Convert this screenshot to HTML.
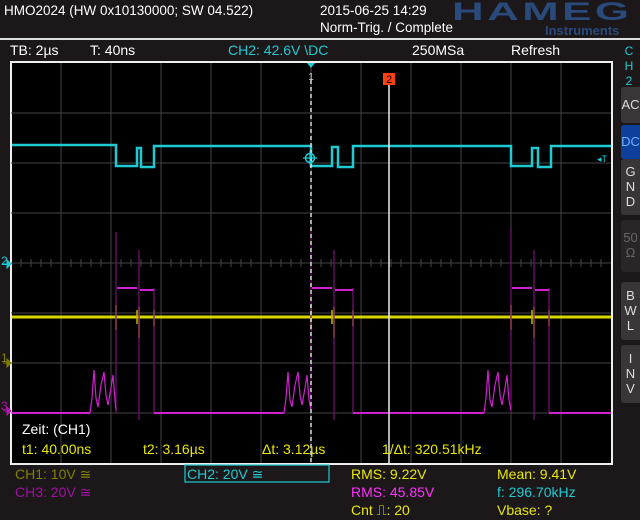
<!DOCTYPE html>
<html><head><meta charset="utf-8"><style>
body{margin:0;width:640px;height:520px;background:#1c1719;overflow:hidden;font-family:"Liberation Sans","DejaVu Sans",sans-serif;position:relative;color:#fff}
.t{position:absolute;white-space:nowrap;font-size:14px;line-height:16px}
.btn{position:absolute;left:621px;width:19px;background:#3a3638;border-radius:3px 0 0 3px;color:#ddd;font-size:13px;text-align:center;line-height:15px}
</style></head><body>
<div class="t" style="left:4px;top:3px;font-size:13.5px">HMO2024 (HW 0x10130000; SW 04.522)</div>
<div class="t" style="left:320px;top:3px;font-size:13.5px">2015-06-25 14:29</div>
<div class="t" style="left:320px;top:20px;font-size:13.5px">Norm-Trig. / Complete</div>
<div class="t" style="left:452px;top:-2px;font-size:25px;line-height:28px;font-weight:bold;color:#2a4a7c;letter-spacing:2px;transform:scale(1.75,1);transform-origin:left">HAMEG</div>
<div class="t" style="left:545px;top:23px;font-size:13px;font-weight:bold;color:#2a4a7c">Instruments</div>
<div style="position:absolute;left:0;top:38px;width:640px;height:2px;background:#ddd"></div>
<div class="t" style="left:10px;top:42px">TB: 2µs</div>
<div class="t" style="left:90px;top:42px">T: 40ns</div>
<div class="t" style="left:228px;top:42px;color:#1ecbd2">CH2: 42.6V \DC</div>
<div class="t" style="left:412px;top:42px">250MSa</div>
<div class="t" style="left:511px;top:42px">Refresh</div>
<div class="t" style="left:624px;top:44px;color:#1ecbd2;font-size:12px;line-height:15px;text-align:center;width:10px">C<br>H<br>2</div>
<div class="btn" style="top:87px;height:36px;line-height:36px">AC</div>
<div class="btn" style="top:125px;height:34px;line-height:34px;background:#0f3f9c;color:#6fb0ff">DC</div>
<div class="btn" style="top:159px;padding-top:5px;height:51px">G<br>N<br>D</div>
<div class="btn" style="top:220px;background:#2a2628;color:#666;padding-top:10px;height:42px">50<br>Ω</div>
<div class="btn" style="top:282px;padding-top:6px;height:52px">B<br>W<br>L</div>
<div class="btn" style="top:345px;padding-top:6px;height:52px">I<br>N<br>V</div>
<svg style="position:absolute;left:0;top:0" width="640" height="520">
<rect x="11" y="62" width="601" height="402" fill="#000" stroke="#eee" stroke-width="2"/>
<g stroke="#444" stroke-width="1">
<path d="M61 63V463M111 63V463M161 63V463M211 63V463M261 63V463M361 63V463M411 63V463M461 63V463M511 63V463M561 63V463"/>
<path d="M311 63V463"/>
<path d="M11 113H611M11 163H611M11 213H611M11 263H611M11 313H611M11 363H611M11 413H611"/>
<path d="M21 259v8M31 259v8M41 259v8M51 259v8M71 259v8M81 259v8M91 259v8M101 259v8M121 259v8M131 259v8M141 259v8M151 259v8M171 259v8M181 259v8M191 259v8M201 259v8M221 259v8M231 259v8M241 259v8M251 259v8M271 259v8M281 259v8M291 259v8M301 259v8M321 259v8M331 259v8M341 259v8M351 259v8M371 259v8M381 259v8M391 259v8M401 259v8M421 259v8M431 259v8M441 259v8M451 259v8M471 259v8M481 259v8M491 259v8M501 259v8M521 259v8M531 259v8M541 259v8M551 259v8M571 259v8M581 259v8M591 259v8M601 259v8"/>
</g>
<!-- yellow -->
<path d="M12 317H611" stroke="#d8d800" stroke-width="3" fill="none"/>
<path d="M116 305V330M137 310V324M139 307V338M154 310V326M311 305V330M332 310V324M334 307V338M353 310V326M511 305V330M532 310V324M534 307V338M549 310V326" stroke="#b8b800" stroke-width="1.5" fill="none"/>
<!-- magenta thin edges -->
<g stroke="#7a107a" stroke-width="1.2"><path d="M116 232V413M139 250V420M154 288V413M311 228V413M334 250V420M353 288V413M511 228V413M534 250V420M549 288V413"/></g>
<!-- magenta -->
<g stroke="#d020d0" stroke-width="2" fill="none">
<path d="M12 413H90"/><path d="M90 413L92 398L94 370L96 398L98 407L101 385L104 372L106 395L108 405L111 388L113 375L115 400L116 410" stroke-width="1.2"/>
<path d="M117 288H137M140 290H154M154 413H284"/>
<path d="M284 413L286 398L288 372L290 400L292 407L295 385L298 372L300 395L302 405L305 388L307 375L309 400L311 410" stroke-width="1.2"/>
<path d="M312 288H332M335 290H353M353 413H484"/>
<path d="M484 413L486 398L488 370L490 400L492 407L495 385L498 372L500 395L502 405L505 388L507 375L509 400L511 410" stroke-width="1.2"/>
<path d="M512 288H532M535 290H549M549 413H611"/>
</g>
<!-- cyan -->
<path d="M12 145H116V166H137V148H141V167H154V146H311V166H332V147H338V167H353V146H511V166H532V148H538V167H551V146H611" stroke="#1ecbd2" stroke-width="2.5" fill="none"/>
<!-- cursors -->
<path d="M311 80V463" stroke="#ddd" stroke-width="1.5" stroke-dasharray="4 3"/>
<path d="M389 84V463" stroke="#eee" stroke-width="1.5"/>
<rect x="383" y="73" width="12" height="12" fill="#ff4010"/>
<text x="389" y="83" fill="#000" font-size="11" text-anchor="middle" font-family="Liberation Sans">2</text>
<text x="311" y="80" fill="#ddd" font-size="10" text-anchor="middle" font-family="Liberation Sans">1</text>
<path d="M307 63h8l-4 5z" fill="#1ecbd2"/>
<circle cx="310" cy="158" r="4.5" stroke="#1ecbd2" fill="none" stroke-width="1.5"/>
<path d="M303 158h14M310 151v14" stroke="#1ecbd2" stroke-width="1.2"/>
<text x="597" y="162" fill="#1ecbd2" font-size="9" font-family="Liberation Sans">◂T</text>
<!-- left markers -->
<text x="1" y="265" fill="#1ecbd2" font-size="12" font-family="Liberation Sans">2</text>
<path d="M3 264h6M7 260l4 4-4 4z" stroke="#1ecbd2" fill="#1ecbd2"/>
<text x="1" y="362" fill="#808000" font-size="12" font-family="Liberation Sans">1</text>
<path d="M3 363h6M7 359l4 4-4 4z" stroke="#808000" fill="#808000"/>
<text x="1" y="410" fill="#b018b0" font-size="12" font-family="Liberation Sans">3</text>
<path d="M3 411h6M7 407l4 4-4 4z" stroke="#b018b0" fill="#b018b0"/>
<rect x="185" y="465" width="144" height="17" fill="none" stroke="#1ecbd2" stroke-width="1.2"/>
</svg>
<div class="t" style="left:22px;top:421px">Zeit: (CH1)</div>
<div class="t" style="left:22px;top:441px;color:#e8e800">t1: 40.00ns</div>
<div class="t" style="left:143px;top:441px;color:#e8e800">t2: 3.16µs</div>
<div class="t" style="left:262px;top:441px;color:#e8e800">Δt: 3.12µs</div>
<div class="t" style="left:382px;top:441px;color:#e8e800">1/Δt: 320.51kHz</div>
<div class="t" style="left:15px;top:466px;color:#808000">CH1: 10V ≅</div>
<div class="t" style="left:15px;top:484px;color:#a010a0">CH3: 20V ≅</div>
<div class="t" style="left:187px;top:466px;color:#1ecbd2">CH2: 20V ≅</div>
<div class="t" style="left:351px;top:466px;color:#e8e800">RMS: 9.22V</div>
<div class="t" style="left:351px;top:484px;color:#ff30ff">RMS: 45.85V</div>
<div class="t" style="left:351px;top:502px;color:#e8e800">Cnt ⎍: 20</div>
<div class="t" style="left:497px;top:466px;color:#e8e800">Mean: 9.41V</div>
<div class="t" style="left:497px;top:484px;color:#1ecbd2">f: 296.70kHz</div>
<div class="t" style="left:497px;top:502px;color:#e8e800">Vbase: ?</div>
</body></html>
